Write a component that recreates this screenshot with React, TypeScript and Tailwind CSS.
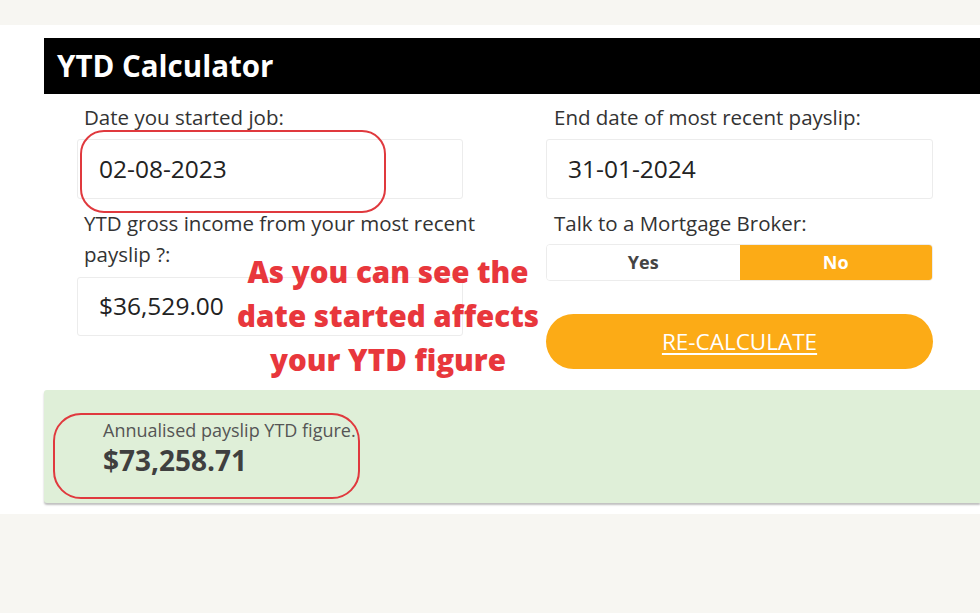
export default function App() {
  return (
    <div className="relative min-h-[613px] bg-[#f7f6f2] pt-[25px] font-['Open_Sans',sans-serif] overflow-hidden">
      <section className="bg-white h-[489px] pt-[13px] pl-[44px]">
        {/* header */}
        <div className="h-[56px] bg-black flex items-center pl-[13px]">
          <h1 className="text-white text-[29.5px] font-bold leading-none">YTD Calculator</h1>
        </div>

        {/* form */}
        <div className="flex gap-[83px] pl-[33px]">
          <div className="w-[386px]">
            <p className="mt-[10px] pl-[7px] text-[20.5px] leading-[26px] text-[#333]">Date you started job:</p>
            <div className="mt-[9px] h-[60px] border border-[#ececec] rounded-[3px] flex items-center pl-[21px] text-[24.5px] text-[#222]">
              02-08-2023
            </div>
            <p className="mt-[9px] pl-[7px] w-[420px] text-[20.5px] leading-[31px] text-[#333]">
              YTD gross income from your most recent
              <br />
              payslip ?:
            </p>
            <div className="mt-[7px] h-[59px] border border-[#ececec] rounded-[3px] flex items-center pl-[21px] text-[24.5px] text-[#222]">
              $36,529.00
            </div>
          </div>

          <div className="w-[387px]">
            <p className="mt-[10px] pl-[8px] text-[20.5px] leading-[26px] text-[#333]">End date of most recent payslip:</p>
            <div className="mt-[9px] h-[60px] border border-[#ececec] rounded-[3px] flex items-center pl-[21px] text-[24.5px] text-[#222]">
              31-01-2024
            </div>
            <p className="mt-[9px] pl-[8px] text-[20.5px] leading-[31px] text-[#333]">Talk to a Mortgage Broker:</p>
            <div className="mt-[5px] h-[37px] flex rounded-[4px] overflow-hidden border border-[#ececec] text-[18px] font-bold">
              <div className="flex-1 flex items-center justify-center text-[#444] bg-white">Yes</div>
              <div className="flex-1 flex items-center justify-center text-white bg-[#fcab16]">No</div>
            </div>
            <div className="mt-[33px] h-[55px] rounded-full bg-[#fcab16] flex items-center justify-center">
              <span className="text-white text-[22.5px] underline underline-offset-[3px]">RE-CALCULATE</span>
            </div>
          </div>
        </div>

        {/* result */}
        <div className="mt-[21px] h-[113px] bg-[#dfefd8] rounded-l-[3px] shadow-[0_2px_2px_rgba(0,0,0,0.25)] pl-[59px] pt-[28px]">
          <p className="text-[18px] leading-[24px] text-[#555]">Annualised payslip YTD figure.</p>
          <p className="text-[28px] leading-[36px] font-bold text-[#3f3f3f]">$73,258.71</p>
        </div>
      </section>

      {/* annotations */}
      <div className="absolute left-[80px] top-[130px] w-[306px] h-[83px] border-[2.5px] border-[#e0393e] rounded-[24px]" />
      <div className="absolute left-[53px] top-[413px] w-[307px] h-[86px] border-[2.5px] border-[#e0393e] rounded-[28px]" />
      <div className="absolute left-[228px] top-[250px] w-[320px] text-center text-[29.5px] leading-[44px] font-extrabold text-[#e8373c] whitespace-nowrap">
        <p>As you can see the</p>
        <p>date started affects</p>
        <p>your YTD figure</p>
      </div>
    </div>
  );
}
